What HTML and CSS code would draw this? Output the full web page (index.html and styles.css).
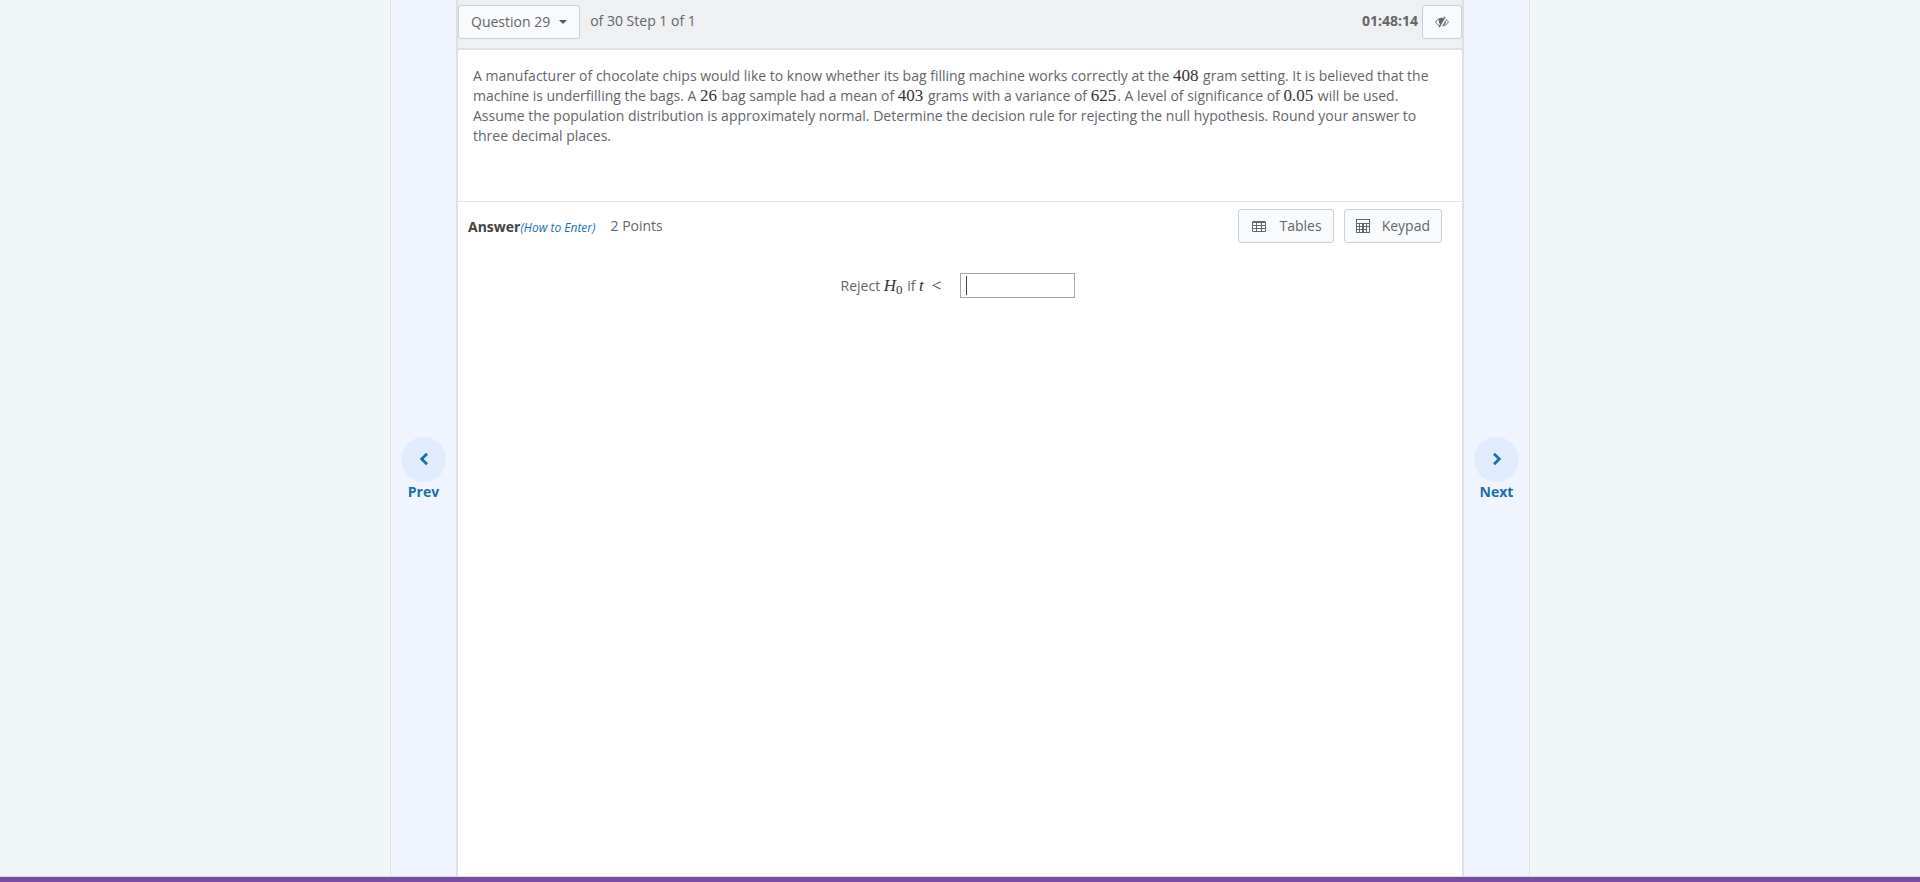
FILE: index.html
```html
<!DOCTYPE html>
<html lang="en">
<head>
<meta charset="utf-8">
<meta name="viewport" content="width=device-width, initial-scale=1">
<title>Question 29</title>
<link rel="stylesheet" href="styles.css">
</head>
<body>
<div class="page">
  <div class="shell">
    <nav class="side" aria-label="Previous question">
      <button class="step" type="button">
        <span class="step-disc"><svg width="10" height="14" viewBox="0 0 10 14" aria-hidden="true"><path d="M8 1.700 2.700 7 8 12.300" fill="none" stroke="currentColor" stroke-width="2.800"/></svg></span>
        <span>Prev</span>
      </button>
    </nav>
    <main class="main">
      <header class="topbar">
        <button class="btn btn-question" type="button">Question 29 <span class="caret"></span></button>
        <span class="progress">of 30 Step 1 of 1</span>
        <span class="timer">01:48:14</span>
        <button class="btn btn-eye" type="button" aria-label="Hide timer">
          <svg width="14" height="12" viewBox="0 0 14 12" aria-hidden="true" fill="none" stroke="currentColor"><path d="M5.300 9.800C3.200 9.300 1.500 7.900.6 6 1.900 3.600 4.200 2.200 7 2.200c.6 0 1.100.1 1.600.2M10.600 3.100c1.200.7 2.100 1.700 2.800 2.900-1.300 2.300-3.400 3.800-6 3.900"/><path d="M4.200 3C3.100 5 3.700 7.400 5.700 8.700L8.700 3C7.400 2 5.400 2 4.200 3Z" fill="currentColor" stroke="none"/><path d="M10 4.600c.5 1.600-.2 3.400-1.800 4.200" stroke-width="1.200"/><path d="M9.900.8 4.200 11.300" stroke-width="1.300"/></svg>
        </button>
      </header>
      <section class="question">
        <p>A manufacturer of chocolate chips would like to know whether its bag filling machine works correctly at the <span class="math">408</span> gram setting. It is believed that the machine is underfilling the bags. A <span class="math">26</span> bag sample had a mean of <span class="math">403</span> grams with a variance of <span class="math">625</span>. A level of significance of <span class="math">0.05</span> will be used. Assume the population distribution is approximately normal. Determine the decision rule for rejecting the null hypothesis. Round your answer to three decimal places.</p>
      </section>
      <section class="answer">
        <div class="answer-bar">
          <h2 class="answer-title">Answer</h2><a class="how" href="#">(How to Enter)</a>
          <span class="points">2 Points</span>
          <div class="tools">
            <button class="btn btn-tool" type="button">
              <svg width="18" height="11" viewBox="-2 0 18 11" aria-hidden="true"><path fill="currentColor" fill-rule="evenodd" d="M1 0h12l1 1v9l-1 1H1l-1-1V1ZM1 2v2h3V2Zm4 0v2h4V2Zm5 0v2h3V2ZM1 5v2h3V5Zm4 0v2h4V5Zm5 0v2h3V5ZM1 8v2h3V8Zm4 0v2h4V8Zm5 0v2h3V8Z"/></svg>
              Tables
            </button>
            <button class="btn btn-tool" type="button">
              <svg width="14" height="14" viewBox="0 0 14 14" aria-hidden="true"><path fill="currentColor" fill-rule="evenodd" d="M0 0h14v14H0ZM1 1v3h12V1ZM1 5v2h2V5Zm3 0v2h2V5Zm4 0v2h2V5Zm3 0v2h2V5ZM1 8v2h2V8Zm3 0v2h2V8Zm4 0v2h2V8ZM1 11v2h2v-2Zm3 0v2h2v-2Zm4 0v2h2v-2Zm3-3v5h2V8Z"/></svg>
              Keypad
            </button>
          </div>
        </div>
        <div class="entry">
          <label for="critical">Reject <span class="math"><i>H</i><sub>0</sub></span> if <span class="math"><i>t</i></span><span class="math less">&lt;</span></label>
          <span class="field"><input id="critical" type="text" autocomplete="off"></span>
        </div>
      </section>
    </main>
    <nav class="side" aria-label="Next question">
      <button class="step" type="button">
        <span class="step-disc"><svg width="10" height="14" viewBox="0 0 10 14" aria-hidden="true"><path d="M2 1.700 7.300 7 2 12.300" fill="none" stroke="currentColor" stroke-width="2.800"/></svg></span>
        <span>Next</span>
      </button>
    </nav>
  </div>
  <footer class="footer"></footer>
</div>
</body>
</html>
```
FILE: styles.css
```css
* {
  box-sizing: border-box;
}

body {
  margin: 0;
  background: #f0f5f8;
  color: #63666a;
  font: 14px/20px "Open Sans", sans-serif;
}

button {
  font: inherit;
  cursor: pointer;
}

.page {
  display: flex;
  flex-direction: column;
  min-height: 100vh;
}

.shell {
  flex: 1;
  display: flex;
  width: 100%;
  max-width: 1140px;
  margin: 0 auto;
  border: solid #dfe1e2;
  border-width: 0 1px;
}

.side {
  flex: 0 0 65px;
  display: flex;
  align-items: center;
  justify-content: center;
  padding-top: 62px;
  background: #f0f5ff;
}

.step {
  display: flex;
  flex-direction: column;
  align-items: center;
  padding: 0;
  border: 0;
  background: none;
  color: #1a6fb0;
  font-weight: 700;
}

.step-disc {
  display: flex;
  align-items: center;
  justify-content: center;
  width: 45px;
  height: 45px;
  border-radius: 50%;
  background: #e1edff;
}

.main {
  flex: 1;
  display: flex;
  flex-direction: column;
  border: solid #dfe0e0;
  border-width: 0 2px;
  background: #fff;
}

.topbar {
  display: flex;
  align-items: center;
  min-height: 50px;
  padding-bottom: 4px;
  border-bottom: 2px solid #dfe0e0;
  background: #eff0f2;
}

.btn {
  display: flex;
  align-items: center;
  height: 34px;
  padding: 0 12px;
  border: 1px solid #c3d2db;
  border-radius: 3px;
  background: #f8fafc;
  color: #63666a;
}

.btn-question {
  gap: 9px;
}

.caret {
  border: solid transparent;
  border-width: 4px 4px 0;
  border-top-color: #555b60;
}

.progress,
.timer {
  padding-bottom: 2px;
}

.progress {
  margin-left: 10px;
}

.timer {
  margin-left: auto;
  margin-right: 4px;
  font-weight: 700;
}

.question {
  min-height: 152px;
  padding: 16px 20px 16px 15px;
  border-bottom: 1px solid #dfe0e0;
}

.question p {
  margin: 0;
}

.math {
  margin-right: 1px;
  color: #333;
  font: 17px/1 "Liberation Serif", serif;
}

.answer-bar {
  display: flex;
  align-items: center;
  padding: 7px 20px 7px 10px;
}

.answer-title {
  margin: 0;
  padding-top: 2px;
  color: #444;
  font-size: 14px;
  line-height: 20px;
}

.how {
  padding-top: 3px;
  color: #1a6fb0;
  font-size: 12px;
  font-style: italic;
  text-decoration: none;
}

.points {
  margin-left: 15px;
}

.tools {
  display: flex;
  gap: 10px;
  margin-left: auto;
}

.btn-tool {
  gap: 12px;
  padding: 0 11px;
}

.entry {
  display: flex;
  align-items: center;
  justify-content: center;
  gap: 18px;
  padding: 23px 10px 0 6px;
}

.entry sub {
  font-size: 13px;
  line-height: 1;
  vertical-align: -3px;
}

.less {
  margin-left: 7px;
}

.field {
  display: flex;
  position: relative;
}

/* Text cursor of the active field */
.field::after {
  content: "";
  position: absolute;
  top: 3px;
  left: 6px;
  width: 1px;
  height: 19px;
  background: #444;
}

.field input {
  width: 115px;
  height: 25px;
  padding: 0 6px;
  border: 1px solid #a5a5a5;
  outline: 0;
  font: inherit;
}

.footer {
  height: 6px;
  border-top: 1px solid #d9dcdc;
  background: #7b4ba3;
}
```
